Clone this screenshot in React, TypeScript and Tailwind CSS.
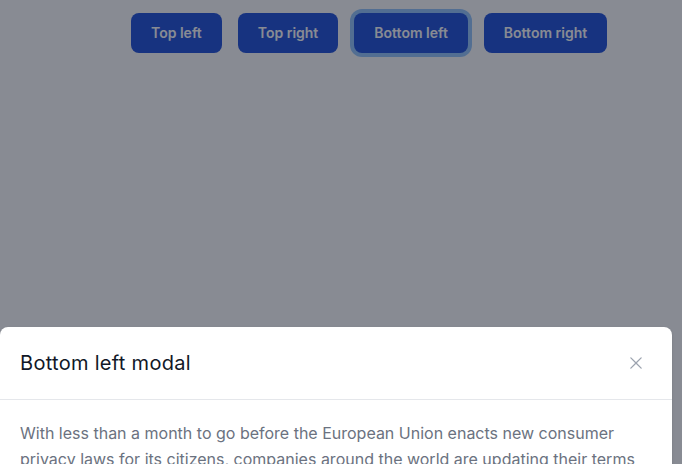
import React from 'react';

const positions = ['Top left', 'Top right', 'Bottom left', 'Bottom right'];

export default function App() {
  const active = 'Bottom left';

  return (
    <div className="relative h-[464px] w-[682px] overflow-hidden bg-white font-['Inter',sans-serif]">
      <div className="flex gap-4 pl-[131px] pt-[13px]">
        {positions.map((p) => (
          <button
            key={p}
            type="button"
            className={
              'h-10 rounded-lg bg-[#1d4ed8] px-5 text-sm font-semibold text-white ' +
              (p === active ? 'ring-4 ring-[#93c5fd]' : '')
            }
          >
            {p}
          </button>
        ))}
      </div>

      {/* backdrop */}
      <div className="absolute inset-0 bg-[#111827]/50" />

      {/* modal */}
      <div className="absolute left-0 top-[327px] w-[672px] rounded-lg bg-white shadow-sm">
        <div className="flex items-center justify-between border-b border-[#e5e7eb] p-5">
          <h3 className="text-xl font-normal tracking-[0.3px] text-[#111827]">Bottom left modal</h3>
          <button
            type="button"
            className="flex h-8 w-8 items-center justify-center rounded-lg text-[#9ca3af]"
          >
            <svg className="h-3 w-3" viewBox="0 0 14 14" fill="none">
              <path
                d="m1 1 6 6m0 0 6 6M7 7l6-6M7 7l-6 6"
                stroke="currentColor"
                strokeWidth="1.5"
                strokeLinecap="round"
                strokeLinejoin="round"
              />
            </svg>
          </button>
        </div>
        <div className="space-y-4 p-5">
          <p className="text-base leading-relaxed text-[#6b7280]">
            With less than a month to go before the European Union enacts new consumer privacy laws for its
            citizens, companies around the world are updating their terms of service agreements to comply.
          </p>
          <p className="text-base leading-relaxed text-[#6b7280]">
            The European Union's General Data Protection Regulation (G.D.P.R.) goes into effect on May 25 and is
            meant to ensure a common set of data rights in the European Union. It requires organizations to notify
            users as soon as possible of high-risk data breaches that could personally affect them.
          </p>
        </div>
      </div>
    </div>
  );
}
